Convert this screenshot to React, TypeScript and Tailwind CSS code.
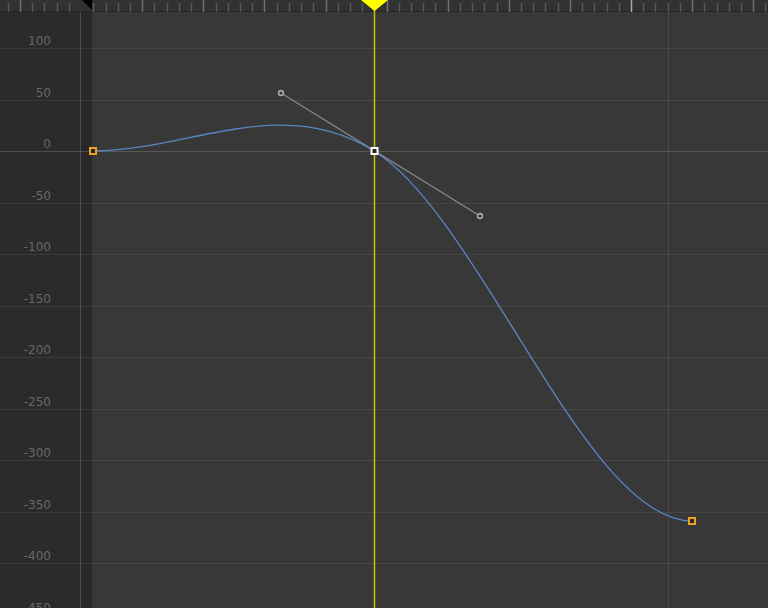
const labels = ["100", "50", "0", "-50", "-100", "-150", "-200", "-250", "-300", "-350", "-400", "-450"];

// gridline y positions (value 0 sits on y=151, 51.5px per 50 units)
const gridY = labels.map((_, i) => 48 + 51.5 * i);

// ruler ticks every 12.22px, major every fifth
const ticks = Array.from({ length: 64 }, (_, i) => {
  const k = i - 11;
  return { x: 142.2 + 12.22 * k, major: ((k % 5) + 5) % 5 === 0, k };
});

function Key({ x, y, color }: { x: number; y: number; color: string }) {
  return <rect x={x - 3} y={y - 3} width={6} height={6} fill="#262626" stroke={color} strokeWidth={2} />;
}

function Handle({ x, y }: { x: number; y: number }) {
  return <circle cx={x} cy={y} r={2.4} fill="#333" stroke="#a8a8a8" strokeWidth={1.6} />;
}

export default function App() {
  return (
    <div className="relative w-[768px] h-[608px] overflow-hidden bg-[#363636] font-['DejaVu_Sans',sans-serif]">
      <div className="flex h-full flex-col">
        <div className="h-[12px] shrink-0 bg-[#323232] border-b border-[#232323]" />
        <div className="flex flex-1">
          <div className="w-[80px] bg-[#2b2b2b]">
            <div className="mt-[-15.5px] flex flex-col">
              {labels.map((l) => (
                <div key={l} className="flex h-[51.5px] shrink-0 items-end justify-end pr-[29px] pb-[1px]">
                  <span className="text-[12px] leading-[12px] text-[#686868]">{l}</span>
                </div>
              ))}
            </div>
          </div>
          <div className="w-px bg-[#4b4b4b]" />
          <div className="w-[11px] bg-[#282828]" />
          <div className="flex-1 bg-[#383838]" />
        </div>
      </div>

      <svg className="pointer-events-none absolute inset-0" width={768} height={608} viewBox="0 0 768 608">
        {/* ruler ticks */}
        {ticks.map((t) =>
          t.x > 80 && t.x < 93 ? null : (
            <line
              key={t.k}
              x1={Math.round(t.x) + 0.5}
              x2={Math.round(t.x) + 0.5}
              y1={t.major ? 0 : 3}
              y2={12}
              stroke={t.k === 40 ? "#a8a8a8" : t.major ? "#6e6e6e" : "#575757"}
              strokeWidth={1.5}
            />
          )
        )}
        <polygon points="82,0 92,0 92,10" fill="#000" />

        {/* horizontal grid */}
        {gridY.map((y, i) => (
          <line
            key={i}
            x1={0}
            x2={768}
            y1={Math.round(y) + 0.5}
            y2={Math.round(y) + 0.5}
            stroke={i === 2 ? "rgba(255,255,255,0.16)" : "rgba(255,255,255,0.08)"}
            strokeWidth={1}
          />
        ))}
        <line x1={668.5} x2={668.5} y1={13} y2={608} stroke="rgba(255,255,255,0.08)" />

        {/* tangent handles */}
        <line x1={281} y1={93} x2={480} y2={216} stroke="#8c8c8c" strokeWidth={1.2} />

        {/* curve */}
        <path
          d="M93,151 C187,151 281,93 374,151 C480,216 586,521 692,521"
          fill="none"
          stroke="#5b86c6"
          strokeWidth={1.3}
        />

        {/* playhead */}
        <line x1={374.5} x2={374.5} y1={0} y2={608} stroke="#c4c400" strokeWidth={1.5} />
        <polygon points="361,0 388,0 374.5,11" fill="#ffff00" />

        <Handle x={281} y={93} />
        <Handle x={480} y={216} />
        <Key x={93} y={151} color="#f0a020" />
        <Key x={374.5} y={151} color="#ffffff" />
        <Key x={692} y={521} color="#f0a020" />
      </svg>
    </div>
  );
}
